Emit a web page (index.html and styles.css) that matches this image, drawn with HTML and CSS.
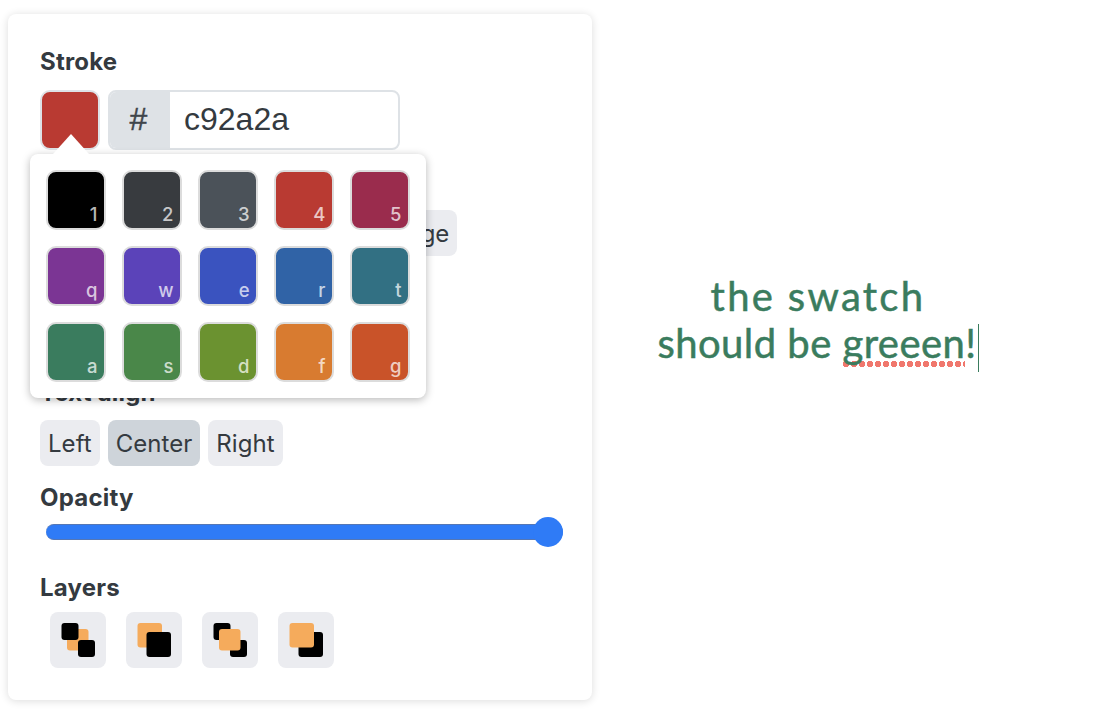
FILE: index.html
```html
<!DOCTYPE html>
<html lang="en">
<head>
<meta charset="utf-8">
<title>Stroke colour picker</title>
<link rel="stylesheet" href="styles.css">
</head>
<body>
<aside class="panel">
  <section class="section first">
    <h3 class="label">Stroke</h3>
    <div class="stroke-row">
      <button class="current"></button>
      <div class="hex"><span class="hash">#</span><span class="hex-value">c92a2a</span></div>
      <div class="popover">
        <span class="arrow"></span>
        <div class="grid">
          <button class="swatch c1">1</button><button class="swatch c2">2</button><button class="swatch c3">3</button><button class="swatch c4">4</button><button class="swatch c5">5</button>
          <button class="swatch cq">q</button><button class="swatch cw">w</button><button class="swatch ce">e</button><button class="swatch cr">r</button><button class="swatch ct">t</button>
          <button class="swatch ca">a</button><button class="swatch cs">s</button><button class="swatch cd">d</button><button class="swatch cf">f</button><button class="swatch cg">g</button>
        </div>
      </div>
    </div>
  </section>
  <section class="section">
    <h3 class="label">Font size</h3>
    <div class="buttons sizes"><button class="btn">Small</button><button class="btn">Medium</button><button class="btn">Large</button><button class="btn">Very large</button></div>
  </section>
  <section class="section">
    <h3 class="label">Font family</h3>
    <div class="buttons"><button class="btn">Hand-drawn</button><button class="btn">Normal</button><button class="btn">Code</button></div>
  </section>
  <section class="section">
    <h3 class="label">Text align</h3>
    <div class="buttons"><button class="btn">Left</button><button class="btn active">Center</button><button class="btn">Right</button></div>
  </section>
  <section class="section opacity">
    <h3 class="label">Opacity</h3>
    <input class="range" type="range" min="0" max="100" value="100">
  </section>
  <section class="section layers">
    <h3 class="label">Layers</h3>
    <div class="layer-row">
      <button class="layer"><svg viewBox="0 0 56 56" width="56" height="56"><rect class="o" x="17" y="17" width="21.500" height="21.500" rx="3"/><rect class="k" x="11.500" y="11" width="17" height="17" rx="3"/><rect class="k" x="28" y="28" width="17" height="17" rx="3"/></svg></button>
      <button class="layer"><svg viewBox="0 0 56 56" width="56" height="56"><rect class="o" x="11.500" y="11" width="24.500" height="24.500" rx="3"/><rect class="k" x="20.500" y="20" width="24.500" height="25" rx="3"/></svg></button>
      <button class="layer"><svg viewBox="0 0 56 56" width="56" height="56"><rect class="k" x="11.500" y="11" width="17" height="17" rx="3"/><rect class="k" x="28" y="28" width="17" height="17" rx="3"/><rect class="o" x="17" y="17" width="21.500" height="21.500" rx="3"/></svg></button>
      <button class="layer"><svg viewBox="0 0 56 56" width="56" height="56"><rect class="k" x="20.500" y="20" width="24.500" height="25" rx="3"/><rect class="o" x="11.500" y="11" width="24.500" height="24.500" rx="3"/></svg></button>
    </div>
  </section>
</aside>
<div class="canvas-text">
  <div class="line wide">the swatch</div>
  <div class="line">should be <span class="typo">greeen</span>!<span class="caret"></span></div>
</div>
</body>
</html>
```
FILE: styles.css
```css
* { box-sizing: border-box; }
html, body { margin: 0; height: 100%; background: #fff; overflow: hidden; }
body { font-family: Inter, "Liberation Sans", sans-serif; color: #343a40; }
button { font: inherit; color: inherit; border: 0; margin: 0; padding: 0; }

.panel {
  width: 584px;
  height: 686px;
  margin: 14px 0 0 8px;
  padding: 36px 32px 0;
  background: #fff;
  border-radius: 8px;
  box-shadow: 0 1px 8px rgba(0, 0, 0, .14);
}
.section { margin-bottom: 20px; }
.section.first { margin-bottom: 21px; }
.section.opacity { margin-bottom: 29px; }
.label {
  margin: 0 0 15px;
  font-size: 24px;
  line-height: 24px;
  font-weight: 700;
  letter-spacing: .2px;
  color: #343a40;
}
.opacity .label { margin-bottom: 7px; }
.layers .label { margin-bottom: 12px; }
.stroke-row { position: relative; display: flex; gap: 8px; margin-top: 16px; }
.current {
  width: 60px;
  height: 60px;
  background: #b93a32;
  border: 2px solid #dee2e6;
  border-radius: 10px;
}
.hex {
  display: flex;
  width: 292px;
  height: 60px;
  border: 2px solid #dee2e6;
  border-radius: 8px;
  overflow: hidden;
  font-family: "Liberation Sans", Arial, sans-serif;
  font-size: 32px;
  line-height: 54px;
  background: #fff;
}
.hash { width: 60px; padding-right: 3px; text-align: center; background: #dee2e6; color: #3f454b; -webkit-text-stroke: .4px #3f454b; }
.hex-value { padding-left: 14px; }
.popover {
  position: absolute;
  z-index: 2;
  left: -10px;
  top: 64px;
  width: 396px;
  height: 244px;
  padding: 16px;
  background: #fff;
  border-radius: 8px;
  box-shadow: 0 2px 8px rgba(0, 0, 0, .28);
}
.arrow {
  position: absolute;
  left: 23px;
  top: -20px;
  width: 0;
  height: 0;
  border-left: 18px solid transparent;
  border-right: 18px solid transparent;
  border-bottom: 20px solid #fff;
}
.grid { display: grid; grid-template-columns: repeat(5, 60px); gap: 16px; }
.swatch {
  width: 60px;
  height: 60px;
  padding: 0 6.500px 2px 0;
  display: flex;
  align-items: flex-end;
  justify-content: flex-end;
  border: 2px solid #dcdcdc;
  border-radius: 10px;
  font-size: 18.500px;
  font-weight: 500;
  line-height: 24px;
  color: rgba(255, 255, 255, .72);
}
.c1 { background: #000; }
.c2 { background: #383b3f; }
.c3 { background: #4b5259; }
.c4 { background: #b93a32; }
.c5 { background: #9a2c4d; }
.cq { background: #7b3594; }
.cw { background: #5b43b9; }
.ce { background: #3a53bf; }
.cr { background: #3063a6; }
.ct { background: #327083; }
.ca { background: #3a7c5e; }
.cs { background: #4a8749; }
.cd { background: #6b9230; }
.cf { background: #d87b30; }
.cg { background: #c95329; }

.buttons { display: flex; gap: 8px; }
.btn {
  height: 46px;
  padding: 0 8px;
  background: #ebecf0;
  border-radius: 8px;
  font-size: 24px;
  letter-spacing: .05px;
  white-space: nowrap;
}
.sizes .btn { letter-spacing: -.15px; }
.btn.active { background: #ced4da; }

.range {
  display: block;
  width: 517px;
  height: 30px;
  margin: 0 0 0 6px;
  padding: 0;
  background: transparent;
  -webkit-appearance: none;
  appearance: none;
}
.range::-webkit-slider-runnable-track {
  height: 16px;
  background: #2f7bf6;
  border-top: 1px solid #5577b5;
  border-bottom: 1px solid #5577b5;
  border-radius: 8px;
}
.range::-webkit-slider-thumb {
  -webkit-appearance: none;
  width: 30px;
  height: 30px;
  margin-top: -8px;
  background: #2f7bf6;
  border-radius: 50%;
}
.layer-row { display: flex; gap: 20px; padding-left: 10px; }
.layer {
  width: 56px;
  height: 56px;
  display: block;
  background: #ebecf0;
  border-radius: 8px;
}
.layer svg { display: block; }
.o { fill: #f5ab5c; }
.k { fill: #000; }

.canvas-text {
  position: absolute;
  left: 640px;
  top: 273px;
  width: 356px;
  text-align: center;
  font-family: Lato, sans-serif;
  font-size: 40px;
  line-height: 47px;
  letter-spacing: .45px;
  -webkit-text-stroke: .5px #3a7c5e;
  color: #3a7c5e;
}
.line { position: relative; white-space: nowrap; }
.line.wide { letter-spacing: 2.3px; }
.typo {
  background-image: radial-gradient(circle at 4px 3px, #f0776d 3px, transparent 3.4px);
  background-size: 8px 6px;
  background-repeat: repeat-x;
  background-position: left bottom;
}
.caret {
  display: inline-block;
  width: 1px;
  height: 48px;
  margin-left: 1px;
  vertical-align: middle;
  background: #3a7c5e;
}
```
